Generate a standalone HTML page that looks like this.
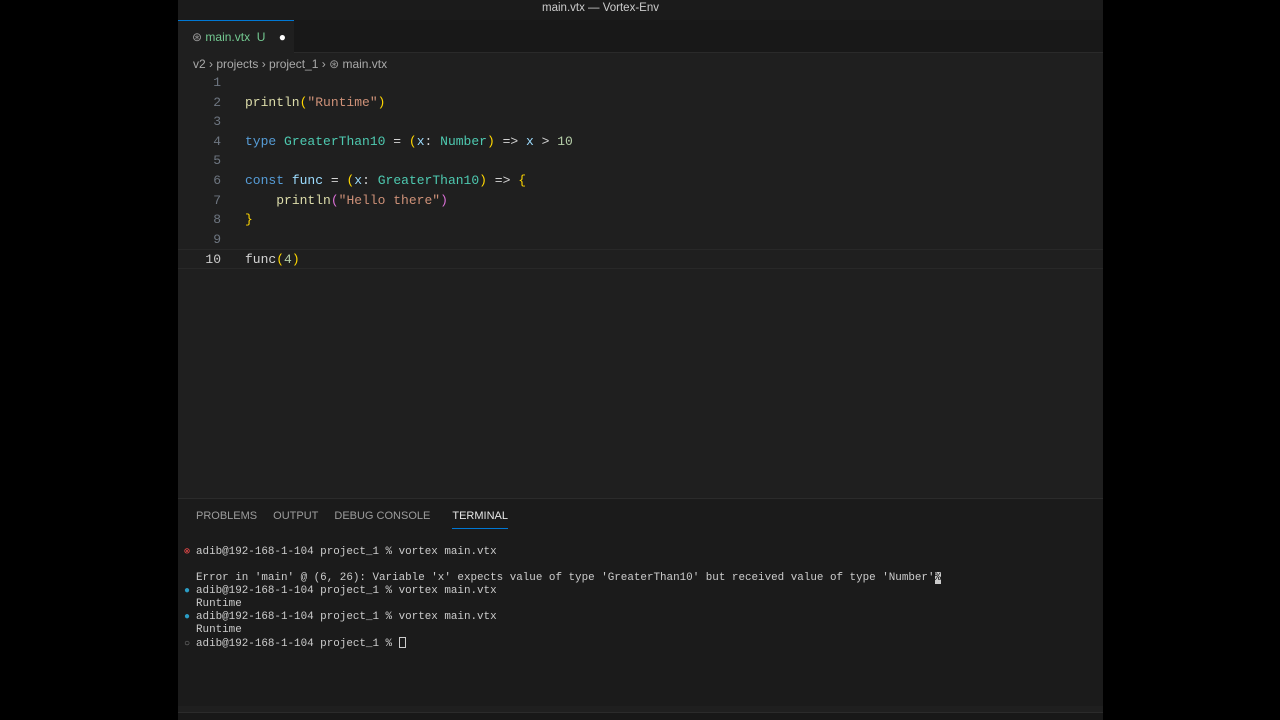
<!DOCTYPE html>
<html><head><meta charset="utf-8"><style>
*{margin:0;padding:0;box-sizing:border-box}
body{width:1280px;height:720px;background:#000;overflow:hidden;position:relative;font-family:"Liberation Sans",sans-serif}
#win{position:absolute;left:178px;top:0;width:925px;height:720px;background:#1f1f1f;overflow:hidden}
#title{height:20px;background:#1b1b1b;color:#ccc;font-size:11.5px;text-align:center;line-height:16px}
#tabs{position:absolute;top:20px;left:0;right:0;height:33px;background:#181818;border-bottom:1px solid #2a2a2a}
#tab{position:absolute;left:0;top:0;width:116px;height:33px;background:#1f1f1f;border-top:1px solid #0078d4;color:#73c991;font-size:12px;line-height:33px;padding-left:14px}
#crumb{position:absolute;top:57px;left:15px;color:#aaa;font-size:12px}
.code{position:absolute;left:0;top:73px;font-family:"Liberation Mono",monospace;font-size:13px;width:100%}
.ln{height:19.6px;line-height:19.6px;white-space:pre;position:relative}
.n{display:inline-block;width:43px;text-align:right;color:#6e7681;margin-right:24px}
.cur{border-top:1px solid #282828;border-bottom:1px solid #282828}
.k{color:#569cd6}.f{color:#dcdcaa}.s{color:#ce9178}.t{color:#4ec9b0}.v{color:#9cdcfe}.m{color:#b5cea8}.p{color:#d4d4d4}.y{color:#ffd700}.pu{color:#da70d6}
#panel{position:absolute;top:498px;left:0;right:0;bottom:14px;border-top:1px solid #2b2b2b;background:#1b1b1b}
#ptabs{position:absolute;top:11px;left:18px;font-size:11px;color:#9d9d9d}
#ptabs span{margin-right:16px}
.term{position:absolute;left:6px;top:47px;font-family:"Liberation Mono",monospace;font-size:10.9px;color:#ccc}
.term div{height:13px;line-height:13px;white-space:pre}
.d{display:inline-block;width:12px;font-size:10px}
#status{position:absolute;bottom:0;left:0;right:0;height:8px;background:#181818;border-top:1px solid #2b2b2b;color:#ccc;font-size:11px}
</style></head><body>
<div id="win">
<div id="title"><span style="position:relative;left:-40px">main.vtx — Vortex-Env</span></div>
<div id="tabs"><div id="tab"><span style="color:#999">⊛</span> main.vtx&nbsp; U &nbsp;&nbsp;&nbsp;<span style="color:#fff">●</span></div></div>
<div id="crumb">v2 › projects › project_1 › <span style="color:#999">⊛</span> main.vtx</div>
<div class="code">
<div class="ln"><span class="n">1</span></div>
<div class="ln"><span class="n">2</span><span class="f">println</span><span class="y">(</span><span class="s">"Runtime"</span><span class="y">)</span></div>
<div class="ln"><span class="n">3</span></div>
<div class="ln"><span class="n">4</span><span class="k">type</span> <span class="t">GreaterThan10</span> <span class="p">=</span> <span class="y">(</span><span class="v">x</span><span class="p">:</span> <span class="t">Number</span><span class="y">)</span> <span class="p">=&gt;</span> <span class="v">x</span> <span class="p">&gt;</span> <span class="m">10</span></div>
<div class="ln"><span class="n">5</span></div>
<div class="ln"><span class="n">6</span><span class="k">const</span> <span class="v">func</span> <span class="p">=</span> <span class="y">(</span><span class="v">x</span><span class="p">:</span> <span class="t">GreaterThan10</span><span class="y">)</span> <span class="p">=&gt;</span> <span class="y">{</span></div>
<div class="ln"><span class="n">7</span>    <span class="f">println</span><span class="pu">(</span><span class="s">"Hello there"</span><span class="pu">)</span></div>
<div class="ln"><span class="n">8</span><span class="y">}</span></div>
<div class="ln"><span class="n">9</span></div>
<div class="ln cur"><span class="n" style="color:#ccc">10</span><span class="p">func</span><span class="y">(</span><span class="m">4</span><span class="y">)</span></div>
</div>
<div id="panel">
<div id="ptabs"><span>PROBLEMS</span><span>OUTPUT</span><span>DEBUG CONSOLE</span><span style="color:#e7e7e7;border-bottom:1px solid #0078d4;padding-bottom:6px;margin-left:6px">TERMINAL</span></div>
<div class="term">
<div><span class="d" style="color:#f14c4c">⊗</span>adib@192-168-1-104 project_1 % vortex main.vtx</div>
<div></div>
<div><span class="d"></span>Error in 'main' @ (6, 26): Variable 'x' expects value of type 'GreaterThan10' but received value of type 'Number'<span style="background:#ccc;color:#000">%</span></div>
<div><span class="d" style="color:#2a9cc4">●</span>adib@192-168-1-104 project_1 % vortex main.vtx</div>
<div><span class="d"></span>Runtime</div>
<div><span class="d" style="color:#2a9cc4">●</span>adib@192-168-1-104 project_1 % vortex main.vtx</div>
<div><span class="d"></span>Runtime</div>
<div><span class="d" style="color:#888">○</span>adib@192-168-1-104 project_1 % <span style="border:1px solid #ccc;display:inline-block;width:7px;height:11px;vertical-align:-2px"></span></div>
</div>
</div>
<div id="status"></div>
</div>
</body></html>
